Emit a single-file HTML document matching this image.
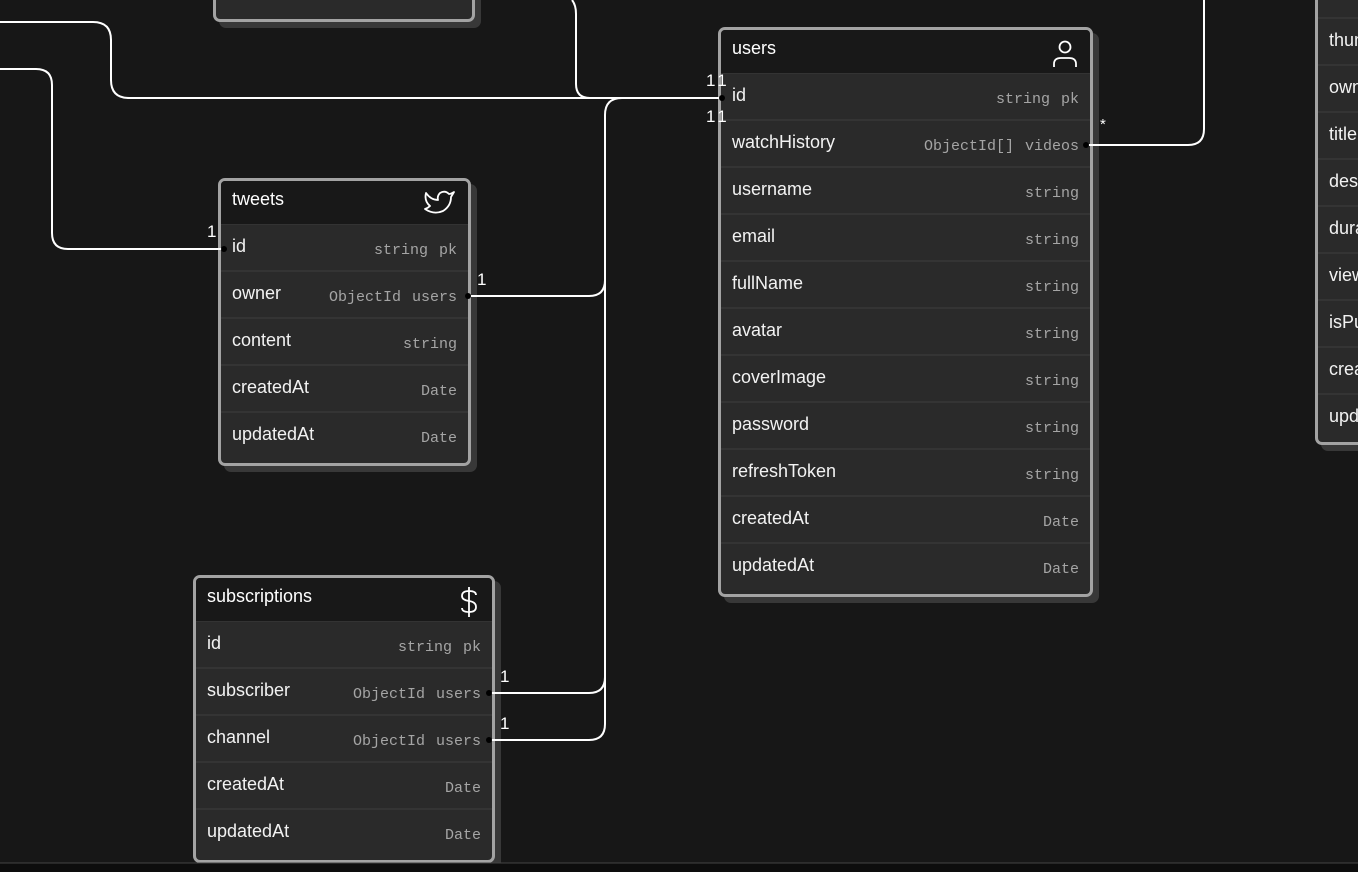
<!DOCTYPE html>
<html><head><meta charset="utf-8"><style>
body{margin:0;width:1358px;height:872px;background:#171717;overflow:hidden;position:relative;font-family:"Liberation Sans",sans-serif}
.t{position:absolute;background:#2a2a2a;border:3px solid #a3a3a3;border-radius:7px;box-shadow:6px 6px 0 #383838;box-sizing:border-box;overflow:hidden}
.h{height:44px;background:#181818;color:#fff;font-size:18px;padding:8px 0 0 11px;box-sizing:border-box;position:relative;border-bottom:1px solid #333}
.r{height:47px;border-bottom:2px solid #343434;box-sizing:border-box;position:relative;color:#f2f2f2;font-size:18px}
.r:last-child{border-bottom:none}
.n{position:absolute;left:11px;top:11px}
.y{position:absolute;right:11px;top:17px;font-family:"Liberation Mono",monospace;font-size:15px;color:#a5a5a5;word-spacing:2px}
.ic{position:absolute;right:12px;top:8px}
svg.l{position:absolute;left:0;top:0;z-index:5}
.lb{position:absolute;color:#fff;font-size:17px;z-index:6}
</style></head><body>
<svg class="l" width="1358" height="872" fill="none" stroke="#fff" stroke-width="2">
<path d="M0 22 H93 Q111 22 111 40 V80 Q111 98 129 98 H722"/>
<path d="M0 69 H36 Q52 69 52 85 V233 Q52 249 68 249 H224"/>
<path d="M572 0 Q576 5 576 14 V84 Q576 98 590 98"/>
<path d="M722 98 H622 Q605 98 605 115 V280 Q605 296 589 296 H468"/>
<path d="M605 280 V677 Q605 693 589 693 H489"/>
<path d="M605 677 V724 Q605 740 589 740 H489"/>
<path d="M1204 0 V129 Q1204 145 1188 145 H1086"/>
<circle cx="722" cy="98" r="3" fill="#000" stroke="none"/>
<circle cx="224" cy="249" r="3" fill="#000" stroke="none"/>
<circle cx="468" cy="296" r="3" fill="#000" stroke="none"/>
<circle cx="489" cy="693" r="3" fill="#000" stroke="none"/>
<circle cx="489" cy="740" r="3" fill="#000" stroke="none"/>
<circle cx="1086" cy="145" r="3" fill="#000" stroke="none"/>
<rect x="0" y="863" width="1358" height="9" fill="#0d0d0d" stroke="none"/>
<line x1="0" y1="863" x2="1358" y2="863" stroke="#444" stroke-width="1"/>
</svg>
<div class="lb" style="left:706px;top:71px;letter-spacing:3px">11</div>
<div class="lb" style="left:706px;top:107px;letter-spacing:3px">11</div>
<div class="lb" style="left:207px;top:222px">1</div>
<div class="lb" style="left:477px;top:270px">1</div>
<div class="lb" style="left:500px;top:667px">1</div>
<div class="lb" style="left:500px;top:714px">1</div>
<div class="lb" style="left:1100px;top:116px;font-size:15px">*</div>

<div class="t" style="left:213px;top:-30px;width:262px;height:52px"></div>

<div class="t" style="left:718px;top:27px;width:375px;height:570px">
<div class="h">users<svg class="ic" width="26" height="30" viewBox="0 0 26 30" fill="none" stroke="#fff" stroke-width="1.8"><circle cx="13" cy="9" r="5.5"/><path d="M2 29 V26 Q2 20 9 20 H17 Q24 20 24 26 V29"/></svg></div>
<div class="r"><span class="n">id</span><span class="y">string pk</span></div>
<div class="r"><span class="n">watchHistory</span><span class="y">ObjectId[] videos</span></div>
<div class="r"><span class="n">username</span><span class="y">string</span></div>
<div class="r"><span class="n">email</span><span class="y">string</span></div>
<div class="r"><span class="n">fullName</span><span class="y">string</span></div>
<div class="r"><span class="n">avatar</span><span class="y">string</span></div>
<div class="r"><span class="n">coverImage</span><span class="y">string</span></div>
<div class="r"><span class="n">password</span><span class="y">string</span></div>
<div class="r"><span class="n">refreshToken</span><span class="y">string</span></div>
<div class="r"><span class="n">createdAt</span><span class="y">Date</span></div>
<div class="r"><span class="n">updatedAt</span><span class="y">Date</span></div>
</div>

<div class="t" style="left:218px;top:178px;width:253px;height:288px">
<div class="h">tweets<svg class="ic" width="32" height="28" viewBox="0 0 32 28" fill="none" stroke="#fff" stroke-width="1.8" stroke-linejoin="round"><path d="M30 3 Q27 5 25 5 Q21 1 16 4 Q13 7 14 11 Q7 11 2 4 Q0 12 6 17 Q4 19 1 20 Q10 26 19 22 Q27 17 27 8 Z"/></svg></div>
<div class="r"><span class="n">id</span><span class="y">string pk</span></div>
<div class="r"><span class="n">owner</span><span class="y">ObjectId users</span></div>
<div class="r"><span class="n">content</span><span class="y">string</span></div>
<div class="r"><span class="n">createdAt</span><span class="y">Date</span></div>
<div class="r"><span class="n">updatedAt</span><span class="y">Date</span></div>
</div>

<div class="t" style="left:193px;top:575px;width:302px;height:288px">
<div class="h">subscriptions<svg class="ic" width="22" height="32" viewBox="0 0 22 32" fill="none" stroke="#fff" stroke-width="1.8"><path d="M11 1 V31"/><path d="M18 9 Q18 5 11 5 Q4 5 4 10 Q4 14 11 15 Q18 16 18 21 Q18 26 11 26 Q4 26 4 22"/></svg></div>
<div class="r"><span class="n">id</span><span class="y">string pk</span></div>
<div class="r"><span class="n">subscriber</span><span class="y">ObjectId users</span></div>
<div class="r"><span class="n">channel</span><span class="y">ObjectId users</span></div>
<div class="r"><span class="n">createdAt</span><span class="y">Date</span></div>
<div class="r"><span class="n">updatedAt</span><span class="y">Date</span></div>
</div>

<div class="t" style="left:1315px;top:-32px;width:120px;height:477px">
<div class="r" style="height:48px"></div>
<div class="r"><span class="n">thumbnail</span></div>
<div class="r"><span class="n">owner</span></div>
<div class="r"><span class="n">title</span></div>
<div class="r"><span class="n">description</span></div>
<div class="r"><span class="n">duration</span></div>
<div class="r"><span class="n">views</span></div>
<div class="r"><span class="n">isPublished</span></div>
<div class="r"><span class="n">createdAt</span></div>
<div class="r"><span class="n">updatedAt</span></div>
</div>
</body></html>
